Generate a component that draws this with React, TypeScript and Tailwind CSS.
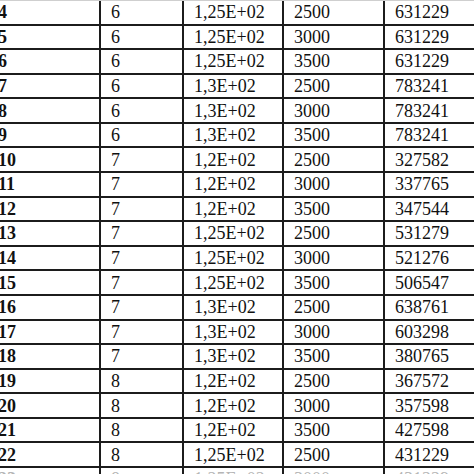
const rows: [string, string, string, string, string][] = [
  ['4', '6', '1,25E+02', '2500', '631229'],
  ['5', '6', '1,25E+02', '3000', '631229'],
  ['6', '6', '1,25E+02', '3500', '631229'],
  ['7', '6', '1,3E+02', '2500', '783241'],
  ['8', '6', '1,3E+02', '3000', '783241'],
  ['9', '6', '1,3E+02', '3500', '783241'],
  ['10', '7', '1,2E+02', '2500', '327582'],
  ['11', '7', '1,2E+02', '3000', '337765'],
  ['12', '7', '1,2E+02', '3500', '347544'],
  ['13', '7', '1,25E+02', '2500', '531279'],
  ['14', '7', '1,25E+02', '3000', '521276'],
  ['15', '7', '1,25E+02', '3500', '506547'],
  ['16', '7', '1,3E+02', '2500', '638761'],
  ['17', '7', '1,3E+02', '3000', '603298'],
  ['18', '7', '1,3E+02', '3500', '380765'],
  ['19', '8', '1,2E+02', '2500', '367572'],
  ['20', '8', '1,2E+02', '3000', '357598'],
  ['21', '8', '1,2E+02', '3500', '427598'],
  ['22', '8', '1,25E+02', '2500', '431229'],
  ['23', '8', '1,25E+02', '3000', '431229'],
];

export default function App() {
  return (
    <div className="h-[474px] w-[474px] overflow-hidden bg-white">
      <div
        className="-ml-[12px] -mt-[1px] w-[517px] border-t-2 border-[#cfcfcf] text-[18px] leading-none text-[#111]"
        style={{ fontFamily: '"Liberation Serif", "Times New Roman", serif' }}
      >
        {rows.map((r, i) => {
          const last = i === rows.length - 1;
          return (
            <div
              key={r[0]}
              className={`grid h-[24.58px] grid-cols-[113px_83px_100px_101px_120px] border-b-2 border-[#1c1c1c] ${last ? 'text-[#b5b5b5]' : ''}`}
            >
              <div className="flex items-center border-r-2 border-[#1c1c1c] pl-[10px] font-bold">{r[0]}</div>
              <div className="flex items-center border-r-2 border-[#1c1c1c] pl-[10px]">{r[1]}</div>
              <div className="flex items-center border-r-2 border-[#1c1c1c] pl-[10px]">{r[2]}</div>
              <div className="flex items-center border-r-2 border-[#1c1c1c] pl-[10px]">{r[3]}</div>
              <div className="flex items-center pl-[10px]">{r[4]}</div>
            </div>
          );
        })}
      </div>
    </div>
  );
}
